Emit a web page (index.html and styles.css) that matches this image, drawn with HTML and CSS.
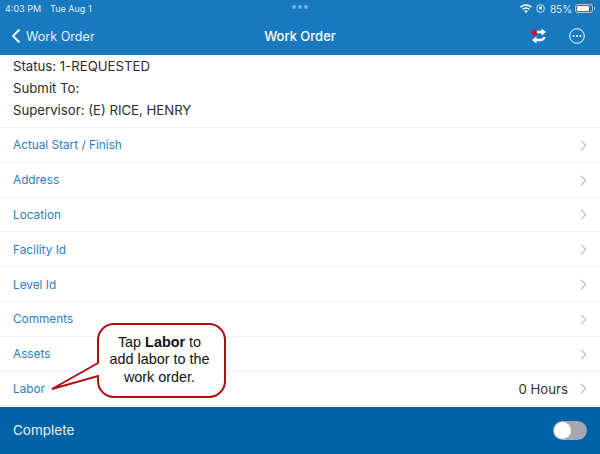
FILE: index.html
```html
<!DOCTYPE html>
<html lang="en">
<head>
<meta charset="utf-8">
<title>Work Order</title>
<link rel="stylesheet" href="styles.css">
</head>
<body>
<div class="app">
  <header class="top">
    <div class="status">
      <div class="status-left"><span>4:03 PM</span><span>Tue Aug 1</span></div>
      <div class="dots"><i></i><i></i><i></i></div>
      <div class="status-right">
        <svg class="wifi" width="12" height="9" viewBox="0 0 12 9"><path d="M6 9 4.200 7a2.600 2.600 0 0 1 3.600 0zM3.300 6 2.200 4.800a5.400 5.400 0 0 1 7.600 0L8.700 6a3.900 3.900 0 0 0-5.400 0zM1.100 3.800 0 2.700a8.500 8.500 0 0 1 12 0l-1.100 1.100a7 7 0 0 0-9.800 0z" fill="#fff"/></svg>
        <svg class="lock" width="9" height="9" viewBox="0 0 9 9"><circle cx="4.500" cy="4.500" r="3.900" fill="none" stroke="#d5e6f3" stroke-width="1"/><rect x="3" y="2.500" width="3" height="3" fill="#d5e6f3"/></svg>
        <span class="pct">85%</span>
        <span class="battery"><span class="battery-fill"></span></span>
      </div>
    </div>
    <div class="nav">
      <div class="back">
        <svg width="10" height="16" viewBox="0 0 10 16"><path d="M8.500 1.500 2 8l6.500 6.500" fill="none" stroke="#fff" stroke-width="1.800"/></svg>
        <span>Work Order</span>
      </div>
      <div class="title">Work Order</div>
      <div class="actions">
        <svg width="16" height="16" viewBox="0 0 16 16"><path d="M1.500 7C2 3.800 4.500 2.800 7.500 2.800H10.500V.5L15 4 10.500 7.500V5.200H7.500C6 5.200 4.500 5.500 4 7z" fill="#fff"/><path d="M14.500 9C14 12.200 11.500 13.200 8.500 13.200H5.500V15.500L1 12 5.500 8.500V10.800H8.500C10 10.800 11.500 10.500 12 9z" fill="#fff"/><circle cx="3.300" cy="4.500" r="2.700" fill="#e8001c"/></svg>
        <svg width="16" height="16" viewBox="0 0 16 16"><circle cx="8" cy="8" r="7.300" fill="none" stroke="#fff" stroke-width="1"/><circle cx="4.600" cy="8" r="1" fill="#fff"/><circle cx="8" cy="8" r="1" fill="#fff"/><circle cx="11.400" cy="8" r="1" fill="#fff"/></svg>
      </div>
    </div>
  </header>
  <main class="content">
    <section class="info">
      <div>Status: 1-REQUESTED</div>
      <div>Submit To:</div>
      <div>Supervisor: (E) RICE, HENRY</div>
    </section>
    <ul class="rows">
      <li class="row"><span>Actual Start / Finish</span><svg class="chev" width="7" height="11" viewBox="0 0 7 11"><path d="M1 .8 5.700 5.500 1 10.200" fill="none" stroke="#c4c4c8" stroke-width="1.300"/></svg></li>
      <li class="row"><span>Address</span><svg class="chev" width="7" height="11" viewBox="0 0 7 11"><path d="M1 .8 5.700 5.500 1 10.200" fill="none" stroke="#c4c4c8" stroke-width="1.300"/></svg></li>
      <li class="row"><span>Location</span><svg class="chev" width="7" height="11" viewBox="0 0 7 11"><path d="M1 .8 5.700 5.500 1 10.200" fill="none" stroke="#c4c4c8" stroke-width="1.300"/></svg></li>
      <li class="row"><span>Facility Id</span><svg class="chev" width="7" height="11" viewBox="0 0 7 11"><path d="M1 .8 5.700 5.500 1 10.200" fill="none" stroke="#c4c4c8" stroke-width="1.300"/></svg></li>
      <li class="row"><span>Level Id</span><svg class="chev" width="7" height="11" viewBox="0 0 7 11"><path d="M1 .8 5.700 5.500 1 10.200" fill="none" stroke="#c4c4c8" stroke-width="1.300"/></svg></li>
      <li class="row"><span>Comments</span><svg class="chev" width="7" height="11" viewBox="0 0 7 11"><path d="M1 .8 5.700 5.500 1 10.200" fill="none" stroke="#c4c4c8" stroke-width="1.300"/></svg></li>
      <li class="row"><span>Assets</span><svg class="chev" width="7" height="11" viewBox="0 0 7 11"><path d="M1 .8 5.700 5.500 1 10.200" fill="none" stroke="#c4c4c8" stroke-width="1.300"/></svg></li>
      <li class="row"><span>Labor</span><span class="value">0 Hours</span><svg class="chev" width="7" height="11" viewBox="0 0 7 11"><path d="M1 .8 5.700 5.500 1 10.200" fill="none" stroke="#c4c4c8" stroke-width="1.300"/></svg></li>
    </ul>
  </main>
  <footer class="foot">
    <span>Complete</span>
    <span class="toggle"><span class="knob"></span></span>
  </footer>
  <div class="callout">
    <svg class="bubble" width="180" height="78" viewBox="0 0 180 78"><path d="M64 2H159a16 16 0 0 1 16 16V59a16 16 0 0 1-16 16H64a16 16 0 0 1-16-16V54L2 67 48 41V18a16 16 0 0 1 16-16z" fill="#fff" stroke="#b30d14" stroke-width="2"/></svg>
    <div class="callout-text">Tap <b>Labor</b> to<br>add labor to the<br>work order.</div>
  </div>
</div>
</body>
</html>
```
FILE: styles.css
```css
* { box-sizing: border-box; }
html, body { margin: 0; padding: 0; }
body { font-family: Inter, Roboto, sans-serif; background: #fff; }
.app { position: relative; width: 600px; height: 454px; display: flex; flex-direction: column; overflow: hidden; }
.top { height: 55px; background: #1879bf; color: #fff; flex: none; }
.status { height: 17px; display: flex; justify-content: space-between; align-items: center; padding: 0 5px 0 5px; font-size: 9px; color: #e2eef7; position: relative; }
.status-left { display: flex; gap: 9px; }
.status-right { display: flex; align-items: center; gap: 3px; font-size: 10px; }
.lock { margin-left: 1px; }
.pct { margin-left: 2px; }
.dots { position: absolute; left: 292px; top: 5px; display: flex; gap: 2px; }
.dots i { width: 4px; height: 4px; border-radius: 50%; background: #6fb2de; }
.battery { position: relative; width: 18px; height: 9px; border: 1px solid #a9cce6; border-radius: 3px; padding: 1px; display: flex; margin-right: 2px; }
.battery::after { content: ""; position: absolute; right: -3px; top: 2px; width: 1px; height: 3px; background: #a9cce6; }
.battery-fill { width: 85%; background: #fff; border-radius: 1px; }
.nav { height: 38px; display: flex; align-items: center; justify-content: space-between; position: relative; padding: 0 15px 0 11px; }
.back { display: flex; align-items: center; gap: 5px; font-size: 12.600px; color: #e6f1f9; }
.title { position: absolute; left: 0; right: 0; text-align: center; font-size: 13px; font-weight: 500; }
.actions { display: flex; gap: 22px; align-items: center; }
.content { flex: 1; min-height: 0; }
.info { height: 73px; padding: 0 13px; font-size: 13.200px; line-height: 22px; color: #2b2b2b; border-bottom: 1px solid #efefef; }
.rows { list-style: none; margin: 0; padding: 0; }
.row { height: 34.800px; display: flex; align-items: center; padding: 1px 13px 0; font-size: 11.800px; color: #2b80bf; border-bottom: 1px solid #efefef; }
.row span:first-child { flex: 1; }
.value { color: #333; font-size: 13.200px; margin-right: 12px; }
.foot { height: 47px; flex: none; background: #0063a5; color: #e9f2f8; font-size: 13.500px; display: flex; align-items: center; justify-content: space-between; padding: 0 13px 1px; }
.toggle { width: 34px; height: 19px; border-radius: 10px; background: #a5a8b0; padding: 1px; display: flex; }
.knob { width: 17px; height: 17px; border-radius: 50%; background: #fff; }
.callout { position: absolute; left: 50px; top: 322px; width: 180px; height: 78px; }
.bubble { display: block; }
.callout-text { position: absolute; left: 46px; top: 11.500px; width: 127px; text-align: center; font-family: "Liberation Sans", Arial, sans-serif; font-size: 14.400px; line-height: 17.500px; color: #111; }
```
